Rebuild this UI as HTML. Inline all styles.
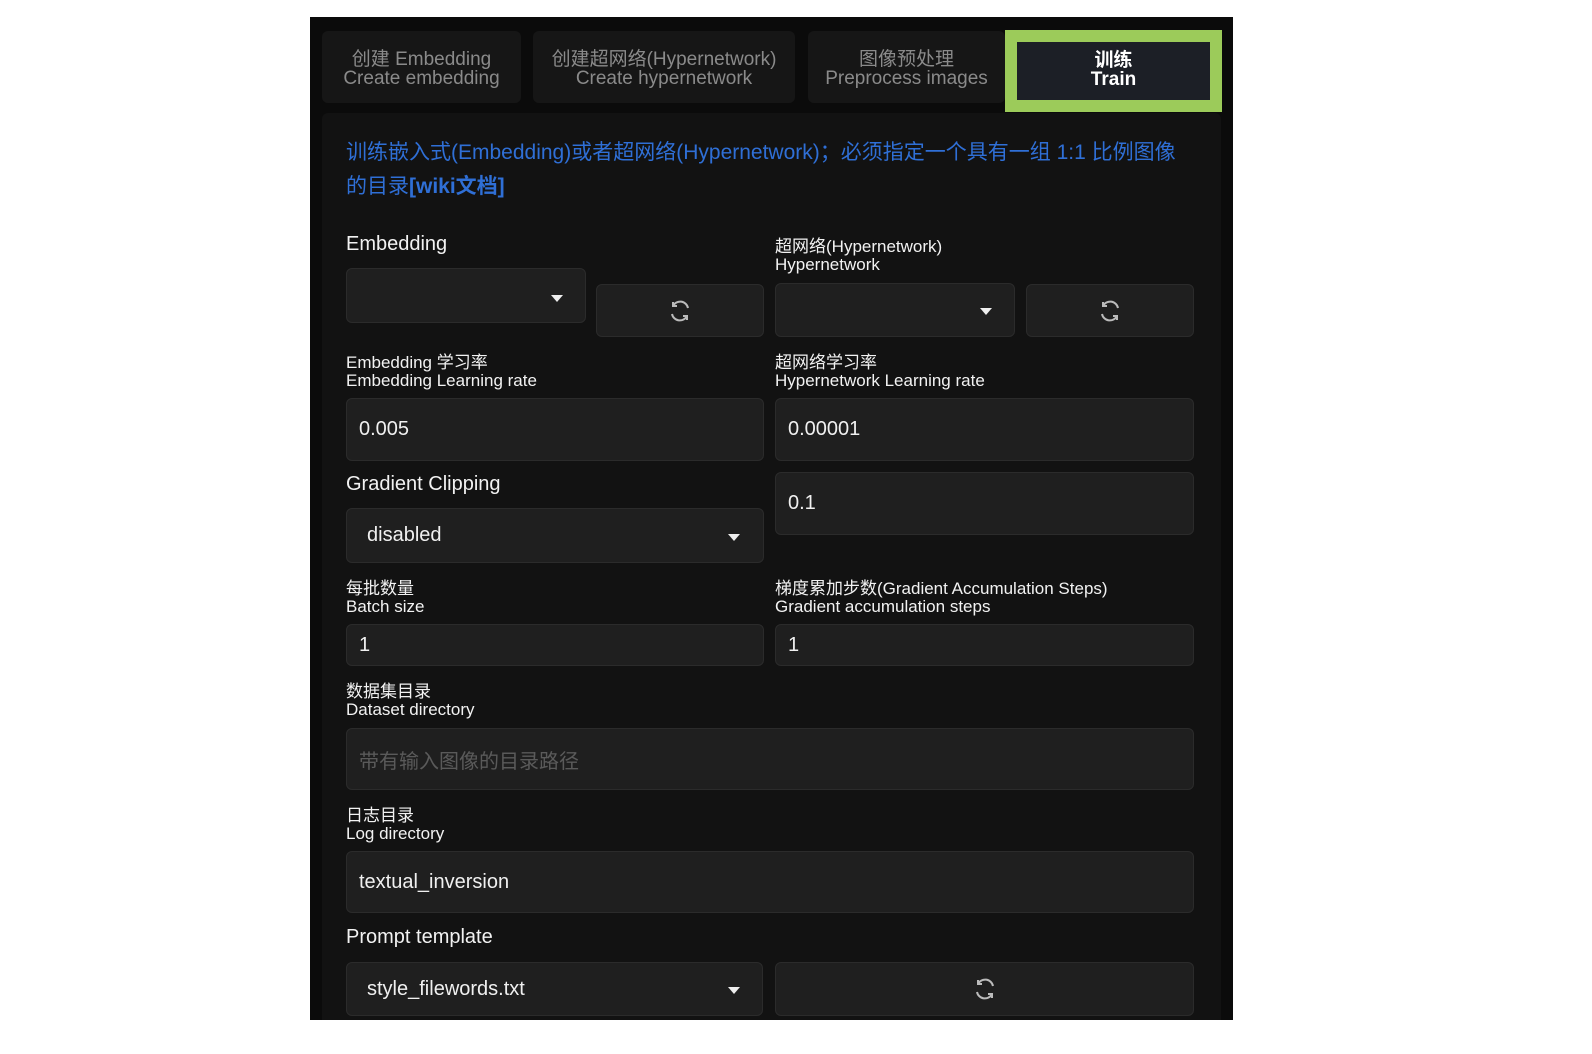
<!DOCTYPE html>
<html><head><meta charset="utf-8"><style>
*{box-sizing:border-box;margin:0;padding:0}
body{width:1592px;height:1054px;background:#fff;position:relative;overflow:hidden;font-family:"Liberation Sans","Noto Sans CJK SC",sans-serif;color:#eee}
.a{position:absolute}
#outer{left:310px;top:17px;width:923px;height:1003px;background:#0b0b0b}
.tab{position:absolute;top:31px;height:72px;background:#161616;border-radius:6px;color:#8a8a8a;font-size:19px;line-height:19px;text-align:center;padding-top:19px}
#panel{left:322px;top:113px;width:899px;height:907px;background:#121212;border-radius:6px 6px 0 0}
.in{position:absolute;background:#1f1f1f;border:1px solid #2b2b2b;border-radius:6px;font-size:20px;color:#f0f0f0;padding-left:12px;display:flex;align-items:center}
.lbl{position:absolute;font-size:17px;line-height:18px;color:#f2f2f2}
.big{position:absolute;font-size:20px;color:#f2f2f2}
.arr{position:absolute;width:0;height:0;border-left:6px solid transparent;border-right:6px solid transparent;border-top:7px solid #eee}
.btn{position:absolute;background:#1f1f1f;border:1px solid #2b2b2b;border-radius:6px;display:flex;align-items:center;justify-content:center}
</style></head><body>
<div id="outer" class="a"></div>
<div class="tab" style="left:322px;width:199px">创建 Embedding<br>Create embedding</div>
<div class="tab" style="left:533px;width:262px">创建超网络(Hypernetwork)<br>Create hypernetwork</div>
<div class="tab" style="left:808px;width:197px">图像预处理<br>Preprocess images</div>
<div class="a" style="left:1005px;top:30px;width:217px;height:82px;background:#9ccb5a"></div>
<div class="a" style="left:1017px;top:42px;width:193px;height:58px;background:#1c1f26;color:#fff;font-weight:bold;font-size:19px;line-height:19px;text-align:center;padding-top:9px">训练<br>Train</div>
<div id="panel" class="a"></div>
<div class="a" style="left:346px;top:136px;width:870px;font-size:21px;line-height:34px;color:#2f6fd6;white-space:nowrap">训练嵌入式(Embedding)或者超网络(Hypernetwork)；必须指定一个具有一组 1:1 比例图像<br>的目录<b>[wiki文档]</b></div>

<div class="big" style="left:346px;top:233px">Embedding</div>
<div class="in" style="left:346px;top:268px;width:240px;height:55px"></div><div class="arr" style="left:551px;top:295px"></div>
<div class="btn" style="left:596px;top:284px;width:168px;height:53px"><svg width="24" height="24" viewBox="0 0 24 24" fill="none" stroke="#bbb" stroke-width="2"><path d="M20 9A8 8 0 0 0 5 7M4 15a8 8 0 0 0 15 2"/><path d="M5 3v4h4M19 21v-4h-4"/></svg></div>
<div class="lbl" style="left:775px;top:238px">超网络(Hypernetwork)<br>Hypernetwork</div>
<div class="in" style="left:775px;top:283px;width:240px;height:54px"></div><div class="arr" style="left:980px;top:308px"></div>
<div class="btn" style="left:1026px;top:284px;width:168px;height:53px"><svg width="24" height="24" viewBox="0 0 24 24" fill="none" stroke="#bbb" stroke-width="2"><path d="M20 9A8 8 0 0 0 5 7M4 15a8 8 0 0 0 15 2"/><path d="M5 3v4h4M19 21v-4h-4"/></svg></div>

<div class="lbl" style="left:346px;top:354px">Embedding 学习率<br>Embedding Learning rate</div>
<div class="in" style="left:346px;top:398px;width:418px;height:63px">0.005</div>
<div class="lbl" style="left:775px;top:354px">超网络学习率<br>Hypernetwork Learning rate</div>
<div class="in" style="left:775px;top:398px;width:419px;height:63px">0.00001</div>

<div class="big" style="left:346px;top:473px">Gradient Clipping</div>
<div class="in" style="left:346px;top:508px;width:418px;height:55px;padding-left:20px">disabled</div><div class="arr" style="left:728px;top:534px"></div>
<div class="in" style="left:775px;top:472px;width:419px;height:63px">0.1</div>

<div class="lbl" style="left:346px;top:580px">每批数量<br>Batch size</div>
<div class="in" style="left:346px;top:624px;width:418px;height:42px">1</div>
<div class="lbl" style="left:775px;top:580px">梯度累加步数(Gradient Accumulation Steps)<br>Gradient accumulation steps</div>
<div class="in" style="left:775px;top:624px;width:419px;height:42px">1</div>

<div class="lbl" style="left:346px;top:683px">数据集目录<br>Dataset directory</div>
<div class="in" style="left:346px;top:728px;width:848px;height:62px;color:#5a5a5a">带有输入图像的目录路径</div>

<div class="lbl" style="left:346px;top:807px">日志目录<br>Log directory</div>
<div class="in" style="left:346px;top:851px;width:848px;height:62px">textual_inversion</div>

<div class="big" style="left:346px;top:926px">Prompt template</div>
<div class="in" style="left:346px;top:962px;width:417px;height:54px;padding-left:20px">style_filewords.txt</div><div class="arr" style="left:728px;top:987px"></div>
<div class="btn" style="left:775px;top:962px;width:419px;height:54px"><svg width="24" height="24" viewBox="0 0 24 24" fill="none" stroke="#bbb" stroke-width="2"><path d="M20 9A8 8 0 0 0 5 7M4 15a8 8 0 0 0 15 2"/><path d="M5 3v4h4M19 21v-4h-4"/></svg></div>
</body></html>
